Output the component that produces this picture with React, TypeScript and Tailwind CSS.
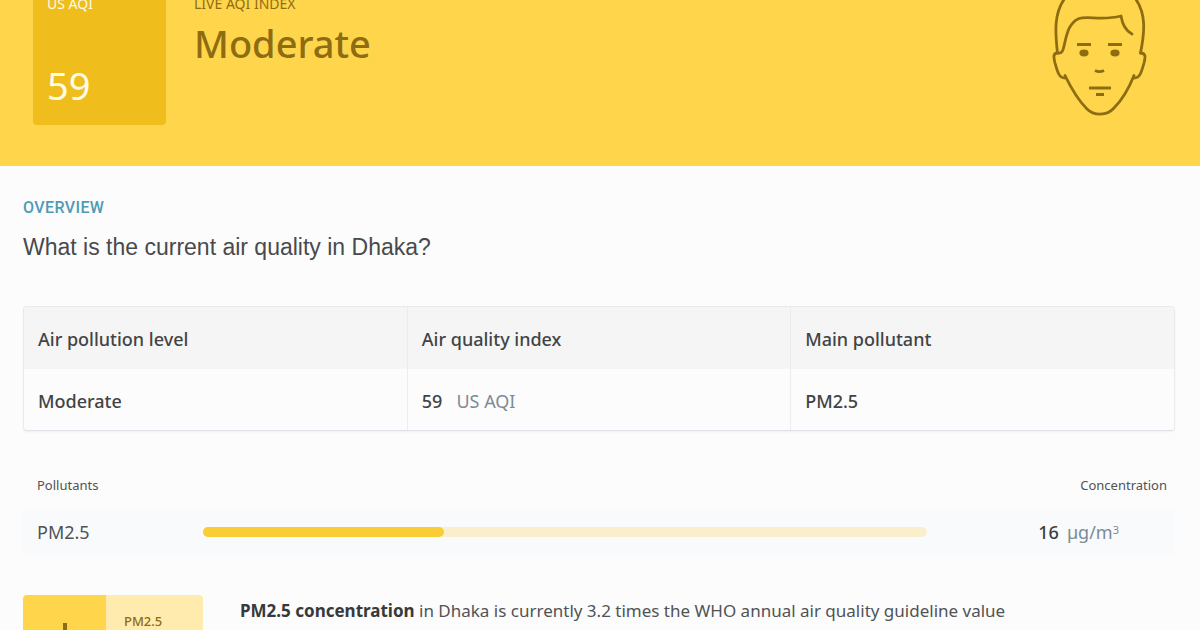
import React from 'react';

const summary = [
  { title: 'Air pollution level', value: 'Moderate', unit: '' },
  { title: 'Air quality index', value: '59', unit: 'US AQI' },
  { title: 'Main pollutant', value: 'PM2.5', unit: '' },
];

function FaceIcon() {
  return (
    <svg
      viewBox="0 0 140 140"
      className="h-[140px] w-[140px] shrink-0"
      fill="none"
      stroke="#8e6c12"
      strokeWidth="2.8"
      strokeLinecap="round"
      strokeLinejoin="round"
      role="img"
      aria-label="Moderate air quality face"
    >
      <path d="M27.5 73C25 51 24 33 35 18C43 7 56 1 70 1C84 1 97 7 105 18C116 33 115 51 110.5 73" />
      <path d="M27.5 73C32 74 33 71 34.5 64C37 53 39 43 49 38.5C58 35.5 71 41 91 36C92.5 45 96 51 102 54" />
      <path d="M27.5 73C23 73 23.5 77 25 83C27.5 92 29 98 35 98" />
      <path d="M110.5 73C116 73 115.5 77 114 83C111.5 92 110 98 104 98" />
      <path d="M35 95.5C41 108 49 121 57 129C64 136 77 136 84 128C92 120 99 108 104 95.5" />
      <path d="M47 64.5H61M78 64.5H92M65 90.5C68 92 71 92 74 90.5M59 108H81M66 114.5H74" strokeLinecap="butt" />
      <g fill="#8e6c12" stroke="none">
        <ellipse cx="54" cy="73" rx="4.6" ry="3.4" />
        <ellipse cx="85" cy="73" rx="4.6" ry="3.4" />
      </g>
    </svg>
  );
}

function Hero() {
  return (
    <header className="-mt-5 flex items-start justify-between bg-[#ffd64b] pr-[30px] pb-[41px] pl-[33px]">
      <div className="flex gap-7">
        <div className="flex h-[145px] w-[133px] flex-col justify-between rounded bg-[#efbe1d] px-3.5 py-3 text-[#fffbe6]">
          <p className="text-[14px] leading-6">US AQI</p>
          <p className="text-[38px] leading-[56px]">59</p>
        </div>
        <div className="pt-3 text-[#8e6c12]">
          <p className="text-[14px] leading-6">LIVE AQI INDEX</p>
          <p className="text-[38px] leading-[54px] font-medium">Moderate</p>
        </div>
      </div>
      <FaceIcon />
    </header>
  );
}

function SummaryTable() {
  return (
    <div className="mt-[42px] overflow-hidden rounded border border-[#e9eaec] border-b-[#dfe0e8] shadow-xs">
      <table className="w-full table-fixed text-left text-[18px] leading-7 text-[#414446]">
        <thead>
          <tr className="bg-[#f5f5f5]">
            {summary.map((item) => (
              <th key={item.title} className="border-r border-[#ececed] px-3.5 pt-[18px] pb-4 font-medium last:border-r-0">
                {item.title}
              </th>
            ))}
          </tr>
        </thead>
        <tbody>
          <tr>
            {summary.map((item) => (
              <td key={item.title} className="border-r border-[#ececed] px-3.5 pt-[18px] pb-[15px] font-medium last:border-r-0">
                {item.value}
                {item.unit && <span className="ml-3.5 font-normal text-[#7c8b95]">{item.unit}</span>}
              </td>
            ))}
          </tr>
        </tbody>
      </table>
    </div>
  );
}

function Pollutants() {
  return (
    <section className="mt-[42px] text-[#505355]">
      <div className="flex justify-between pr-2 pl-3.5 text-[13px] leading-6">
        <span>Pollutants</span>
        <span>Concentration</span>
      </div>
      <div className="mt-3 flex h-[46px] items-center bg-[#f9fafc] pr-14 pl-3.5 text-[18px] leading-7">
        <span className="w-[166px] shrink-0">PM2.5</span>
        <div className="h-2.5 flex-1 rounded-full bg-[#f9efcc]">
          <div className="h-full w-1/3 rounded-full bg-[#f9cd36]" />
        </div>
        <span className="flex w-[192px] justify-end gap-2">
          <span className="font-medium text-[#3c3f41]">16</span>
          <span className="text-[#7c8b95]">
            µg/m<sup className="text-[11px]">3</sup>
          </span>
        </span>
      </div>
    </section>
  );
}

function Guideline() {
  return (
    <section className="mt-10 flex items-start gap-[37px] text-[#505355]">
      <div className="flex h-[84px] w-[180px] shrink-0 overflow-hidden rounded">
        <div className="flex w-[83px] justify-center bg-[#ffd64b] pt-7">
          <svg viewBox="0 0 28 28" className="h-7 w-7" fill="none" stroke="#8e6c12" strokeWidth="4" aria-hidden="true">
            <path d="M14 0V22M5 14L14 23L23 14" />
          </svg>
        </div>
        <div className="flex-1 bg-[#ffebae] px-[18px] pt-3.5 text-[13px] leading-6 font-medium text-[#8e6c12]">PM2.5</div>
      </div>
      <p className="pt-0.5 text-[17px] leading-7">
        <strong className="font-bold text-[#37393b]">PM2.5 concentration</strong> in Dhaka is currently 3.2 times the WHO annual
        air quality guideline value
      </p>
    </section>
  );
}

export default function App() {
  return (
    <div className="flex h-screen flex-col overflow-hidden bg-[#fcfcfc] font-['Noto_Sans',sans-serif]">
      <Hero />
      <main className="pt-[30px] pr-[25px] pl-[23px]">
        <h2 className="font-['Roboto',sans-serif] text-[16px] leading-6 font-medium tracking-wide text-[#4f9bb5]">OVERVIEW</h2>
        <h1 className="mt-2.5 font-['Liberation_Sans',sans-serif] text-[23px] leading-[34px] text-[#484a4c]">
          What is the current air quality in Dhaka?
        </h1>
        <SummaryTable />
        <Pollutants />
        <Guideline />
      </main>
    </div>
  );
}
